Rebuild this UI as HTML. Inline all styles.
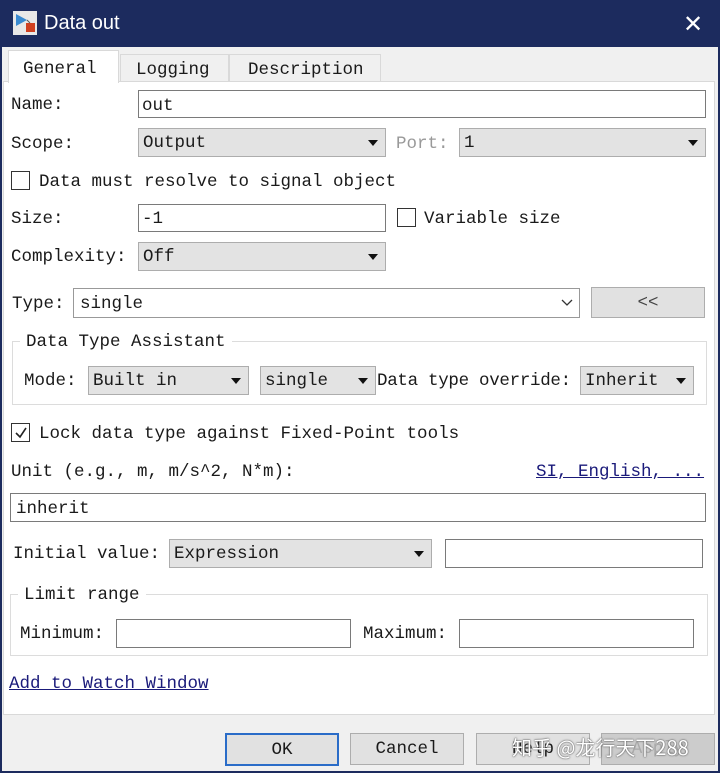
<!DOCTYPE html>
<html><head><meta charset="utf-8"><style>
*{box-sizing:border-box;margin:0;padding:0}
body{width:720px;height:773px;overflow:hidden;background:#1c2b5e;font-family:"Liberation Mono","Noto Serif CJK SC",monospace;font-size:17.5px;color:#1a1a1a;position:relative}
.a{position:absolute}
.t{position:absolute;line-height:20px;white-space:nowrap}
.inp{position:absolute;background:#fff;border:1px solid #7a7a7a}
.dd{position:absolute;background:#e3e3e3;border:1px solid #adadad}
.dd span{position:absolute;left:4px;top:4px;line-height:20px}
.dd i{position:absolute;right:7px;top:11px;width:0;height:0;border-left:5px solid transparent;border-right:5px solid transparent;border-top:6px solid #111}
.cb{position:absolute;width:19px;height:19px;border:1.5px solid #333;background:#fff}
.btn{position:absolute;background:#e1e1e1;border:1px solid #adadad;text-align:center;line-height:30px}
.grp{position:absolute;border:1px solid #dcdcdc}
.lnk{color:#1a1a7a;text-decoration:underline}
</style></head><body>
<div class="a" style="left:0;top:0;width:720px;height:47px;background:#1c2b5e"></div>
<svg class="a" style="left:13px;top:11px" width="24" height="24"><rect x="0" y="0" width="24" height="24" fill="#e8e8e8"/><path d="M3 3 L14 9 L3 15Z" fill="#3a8ad0"/><rect x="13" y="12" width="9" height="9" fill="#d04020"/><path d="M14 9 L17 12" stroke="#555"/></svg>
<div class="a" style="left:44px;top:12px;color:#fff;font-family:'Liberation Sans',sans-serif;font-size:20px">Data out</div>
<div class="a" style="left:683px;top:10px;color:#fff;font-family:'Liberation Sans',sans-serif;font-size:24px">✕</div>
<div class="a" style="left:2px;top:47px;width:716px;height:724px;background:#f0f0f0"></div>
<div class="a" style="left:120px;top:54px;width:109px;height:28px;background:#f0f0f0;border:1px solid #d9d9d9"></div>
<div class="a" style="left:229px;top:54px;width:152px;height:28px;background:#f0f0f0;border:1px solid #d9d9d9"></div>
<div class="a" style="left:3px;top:81px;width:712px;height:634px;background:#fff;border:1px solid #d9d9d9"></div>
<div class="a" style="left:8px;top:50px;width:111px;height:33px;background:#fff;border:1px solid #d9d9d9;border-bottom:none"></div>
<div class="t" style="left:23px;top:59px">General</div>
<div class="t" style="left:136px;top:60px">Logging</div>
<div class="t" style="left:248px;top:60px">Description</div>

<div class="t" style="left:11px;top:95px">Name:</div>
<div class="inp" style="left:138px;top:90px;width:568px;height:28px"></div>
<div class="t" style="left:142px;top:96px">out</div>

<div class="t" style="left:11px;top:134px">Scope:</div>
<div class="dd" style="left:138px;top:128px;width:248px;height:29px"><span>Output</span><i></i></div>
<div class="t" style="left:396px;top:134px;color:#999">Port:</div>
<div class="dd" style="left:459px;top:128px;width:247px;height:29px"><span>1</span><i></i></div>

<div class="cb" style="left:11px;top:171px"></div>
<div class="t" style="left:39px;top:172px">Data must resolve to signal object</div>

<div class="t" style="left:11px;top:209px">Size:</div>
<div class="inp" style="left:138px;top:204px;width:248px;height:28px"></div>
<div class="t" style="left:142px;top:209px">-1</div>
<div class="cb" style="left:397px;top:208px"></div>
<div class="t" style="left:424px;top:209px">Variable size</div>

<div class="t" style="left:11px;top:247px">Complexity:</div>
<div class="dd" style="left:138px;top:242px;width:248px;height:29px"><span>Off</span><i></i></div>

<div class="t" style="left:12px;top:294px">Type:</div>
<div class="inp" style="left:73px;top:288px;width:507px;height:30px;border-color:#999"></div>
<div class="t" style="left:80px;top:294px">single</div>
<svg class="a" style="left:561px;top:298px" width="12" height="10"><path d="M1 2 L6 7 L11 2" stroke="#333" fill="none" stroke-width="1.3"/></svg>
<div class="btn" style="left:591px;top:287px;width:114px;height:31px;color:#444">&lt;&lt;</div>

<div class="grp" style="left:12px;top:341px;width:695px;height:64px"></div>
<div class="t" style="left:20px;top:332px;background:#fff;padding:0 6px">Data Type Assistant</div>
<div class="t" style="left:24px;top:371px">Mode:</div>
<div class="dd" style="left:88px;top:366px;width:161px;height:29px"><span>Built in</span><i></i></div>
<div class="dd" style="left:260px;top:366px;width:116px;height:29px"><span>single</span><i></i></div>
<div class="t" style="left:377px;top:371px;letter-spacing:-0.3px">Data type override:</div>
<div class="dd" style="left:580px;top:366px;width:114px;height:29px"><span>Inherit</span><i></i></div>

<div class="cb" style="left:11px;top:423px"></div>
<svg class="a" style="left:13px;top:425px" width="16" height="16"><path d="M3 8 L7 12 L13 3" stroke="#222" fill="none" stroke-width="1.6"/></svg>
<div class="t" style="left:39px;top:424px">Lock data type against Fixed-Point tools</div>

<div class="t" style="left:11px;top:462px">Unit (e.g., m, m/s^2, N*m):</div>
<div class="t lnk" style="left:536px;top:462px">SI, English, ...</div>
<div class="inp" style="left:10px;top:493px;width:696px;height:29px"></div>
<div class="t" style="left:16px;top:499px">inherit</div>

<div class="t" style="left:13px;top:544px">Initial value:</div>
<div class="dd" style="left:169px;top:539px;width:263px;height:29px"><span>Expression</span><i></i></div>
<div class="inp" style="left:445px;top:539px;width:258px;height:29px"></div>

<div class="grp" style="left:10px;top:594px;width:698px;height:62px"></div>
<div class="t" style="left:18px;top:585px;background:#fff;padding:0 6px">Limit range</div>
<div class="t" style="left:20px;top:624px">Minimum:</div>
<div class="inp" style="left:116px;top:619px;width:235px;height:29px"></div>
<div class="t" style="left:363px;top:624px">Maximum:</div>
<div class="inp" style="left:459px;top:619px;width:235px;height:29px"></div>

<div class="t lnk" style="left:9px;top:674px">Add to Watch Window</div>

<div class="btn" style="left:225px;top:733px;width:114px;height:33px;border:2px solid #2a6cc8">OK</div>
<div class="btn" style="left:350px;top:733px;width:114px;height:32px">Cancel</div>
<div class="btn" style="left:476px;top:733px;width:114px;height:32px">Help</div>
<div class="btn" style="left:601px;top:733px;width:114px;height:32px;background:#ccc;color:#aaa">Apply</div>
<div class="a" style="left:512px;top:732px;font-family:'Noto Sans CJK SC',sans-serif;font-size:20px;color:#fff;text-shadow:0 0 2px #666,0 0 1px #333;white-space:nowrap">知乎 @龙行天下288</div>
</body></html>
